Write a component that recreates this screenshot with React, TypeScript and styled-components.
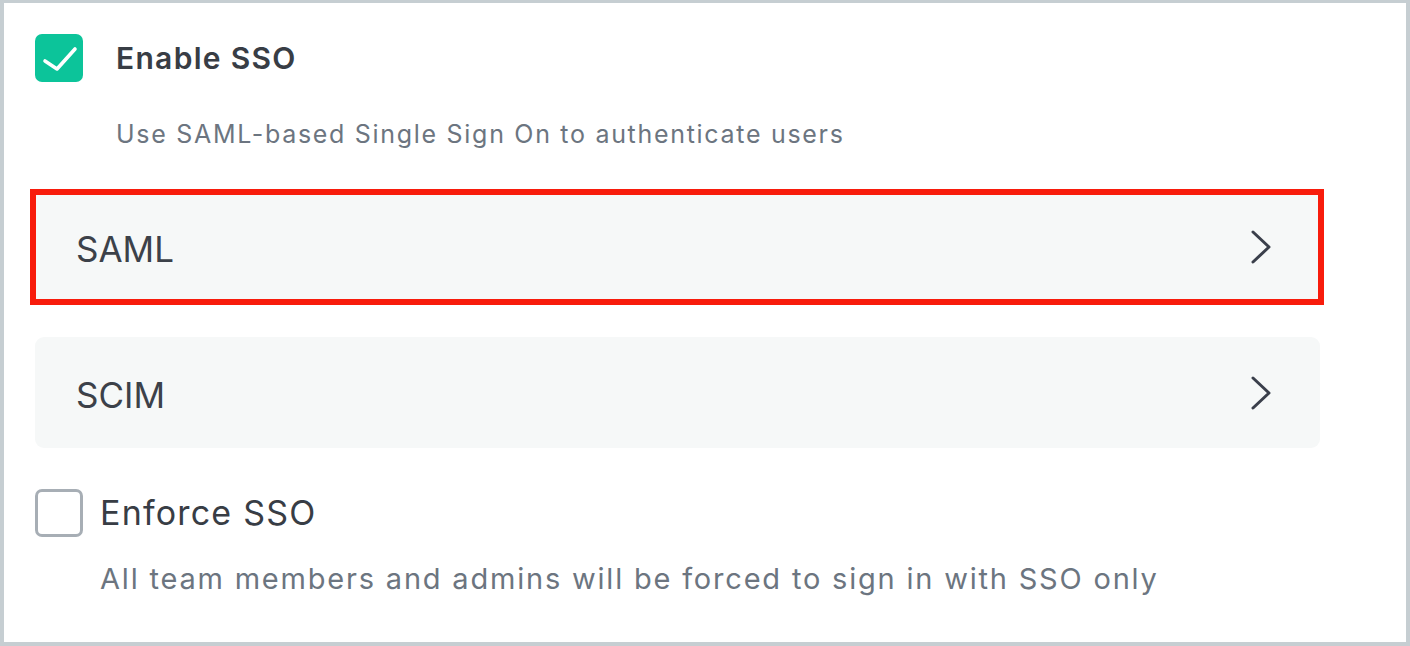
import styled, { createGlobalStyle } from "styled-components";

const GlobalStyle = createGlobalStyle`
  html, body {
    margin: 0;
    padding: 0;
    background: #ffffff;
  }
  body {
    font-family: Inter, "Noto Sans", sans-serif;
    color: #383d45;
  }
`;

function CheckIcon() {
  return (
    <svg width="48" height="48" viewBox="0 0 48 48" fill="none">
      <polyline
        points="10,27 22,35 40,15"
        stroke="#ffffff"
        strokeWidth="3.6"
        strokeLinecap="round"
        strokeLinejoin="round"
      />
    </svg>
  );
}

function Chevron() {
  return (
    <svg width="20" height="34" viewBox="0 0 20 34" fill="none">
      <polyline
        points="2,2 18,17 2,32"
        stroke="#3a3f4b"
        strokeWidth="3"
        strokeLinecap="round"
        strokeLinejoin="round"
      />
    </svg>
  );
}

function SettingLink(props: { label: string; highlight?: boolean }) {
  return (
    <Item $highlight={props.highlight}>
      <ItemLabel>{props.label}</ItemLabel>
      <Chevron />
    </Item>
  );
}

function App() {
  return (
    <>
      <GlobalStyle />
      <Frame>
        <EnableRow>
          <CheckBox $checked>
            <CheckIcon />
          </CheckBox>
          <EnableTitle>Enable SSO</EnableTitle>
        </EnableRow>
        <EnableHint>Use SAML-based Single Sign On to authenticate users</EnableHint>
        <Items>
          <SettingLink label="SAML" highlight />
          <SettingLink label="SCIM" />
        </Items>
        <EnforceRow>
          <CheckBox />
          <EnforceTitle>Enforce SSO</EnforceTitle>
        </EnforceRow>
        <EnforceHint>
          All team members and admins will be forced to sign in with SSO only
        </EnforceHint>
      </Frame>
    </>
  );
}

const Frame = styled.div`
  box-sizing: border-box;
  width: 1410px;
  height: 646px;
  border: 4px solid #c6ced2;
  border-top-width: 3px;
  background: #ffffff;
  padding: 31px 86px 0 31px;
  display: flex;
  flex-direction: column;
`;

const EnableRow = styled.div`
  display: flex;
  align-items: center;
  gap: 33px;
`;

const CheckBox = styled.div<{ $checked?: boolean }>`
  box-sizing: border-box;
  width: 48px;
  height: 48px;
  flex: none;
  border-radius: 7px;
  background: ${(p) => (p.$checked ? "#0cc49a" : "#ffffff")};
  border: ${(p) => (p.$checked ? "none" : "3px solid #a7aeb5")};
  display: flex;
`;

const EnableTitle = styled.div`
  font-size: 30px;
  font-weight: 600;
  color: #383d45;
  line-height: 40px;
  letter-spacing: 1.3px;
  white-space: nowrap;
`;

const EnableHint = styled.div`
  margin: 36px 0 0 81px;
  font-size: 25px;
  color: #6c7580;
  line-height: 32px;
  letter-spacing: 1.7px;
  white-space: nowrap;
`;

const Items = styled.div`
  margin-top: 39px;
  display: flex;
  flex-direction: column;
  gap: 32px;
`;

const Item = styled.div<{ $highlight?: boolean }>`
  box-sizing: border-box;
  display: flex;
  align-items: center;
  justify-content: space-between;
  background: #f6f8f8;
  border-radius: ${(p) => (p.$highlight ? "0" : "9px")};
  height: ${(p) => (p.$highlight ? "116px" : "111px")};
  margin: ${(p) => (p.$highlight ? "0 -4px 0 -5px" : "0")};
  border: ${(p) => (p.$highlight ? "6px solid #f81c0c" : "none")};
  padding: ${(p) => (p.$highlight ? "0 47px 0 40px" : "0 49px 0 41px")};
`;

const ItemLabel = styled.div`
  margin-top: 4px;
  font-size: 35px;
  font-weight: 400;
  color: #3c4149;
  line-height: 42px;
`;

const EnforceRow = styled.div`
  margin-top: 41px;
  display: flex;
  align-items: center;
  gap: 17px;
`;

const EnforceTitle = styled.div`
  font-size: 34px;
  font-weight: 400;
  color: #383d45;
  line-height: 42px;
  letter-spacing: 1.2px;
  white-space: nowrap;
`;

const EnforceHint = styled.div`
  margin: 24px 0 0 65px;
  font-size: 29px;
  color: #6c7580;
  line-height: 36px;
  letter-spacing: 1.8px;
  white-space: nowrap;
`;

export default App;
